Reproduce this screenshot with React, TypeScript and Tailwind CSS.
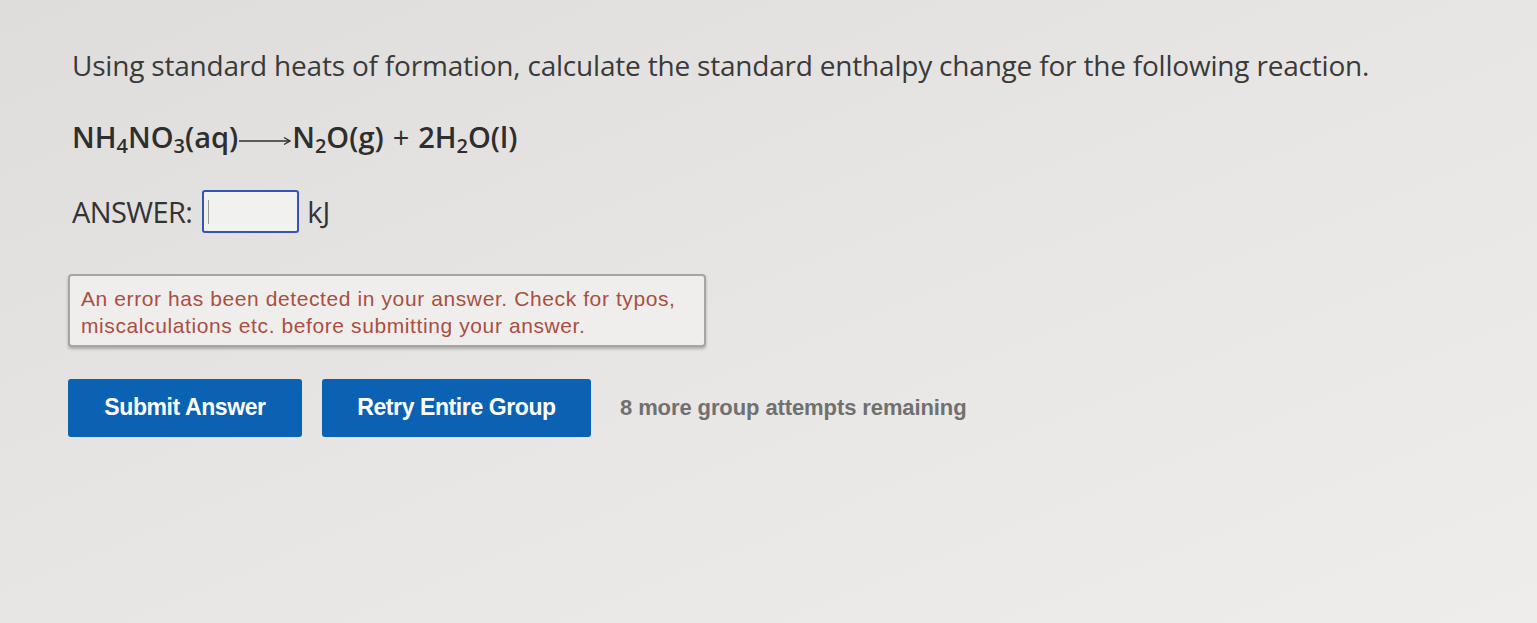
export default function App() {
  return (
    <div className="min-h-[623px] w-full bg-gradient-to-br from-[#dedddb] via-[#e7e6e4] to-[#eeedeb] pl-[72px] pt-[44px]">
      <p className="text-[28px] leading-[42px] text-[#3a3a3a] tracking-[-0.2px]" style={{ fontFamily: '"Open Sans", sans-serif' }}>
        Using standard heats of formation, calculate the standard enthalpy change for the following reaction.
      </p>

      <p className="mt-[31px] flex items-baseline text-[29px] leading-[40px] font-semibold text-[#2e2e2e]" style={{ fontFamily: '"Open Sans", sans-serif' }}>
        <span>
          NH<sub className="text-[20px]">4</sub>NO<sub className="text-[20px]">3</sub>(aq)
        </span>
        {/* long reaction arrow */}
        <svg width="52" height="12" viewBox="0 0 52 12" className="mx-[1px] self-center translate-y-[4px]">
          <line x1="0" y1="6" x2="50" y2="6" stroke="#2e2e2e" strokeWidth="1.4" />
          <path d="M45 2.5 L51 6 L45 9.5" fill="none" stroke="#2e2e2e" strokeWidth="1.4" />
        </svg>
        <span>
          N<sub className="text-[20px]">2</sub>O(g)<span className="mx-[9px] font-normal">+</span>2H<sub className="text-[20px]">2</sub>O(l)
        </span>
      </p>

      <div className="mt-[33px] flex items-center text-[29px] text-[#333]" style={{ fontFamily: '"Open Sans", sans-serif' }}>
        <span className="tracking-[-0.6px]">ANSWER:</span>
        <div className="ml-[10px] h-[43px] w-[97px] rounded-[3px] border-[2px] border-[#3553b8] bg-[#f1f1ef] px-[4px] py-[8px]">
          <div className="h-[24px] w-[1px] bg-[#999]" />
        </div>
        <span className="ml-[8px]">kJ</span>
      </div>

      <div className="-ml-[4px] mt-[40px] h-[73px] w-[638px] rounded-[4px] border-[2px] border-[#a5a5a5] bg-[#efeeec] px-[11px] pt-[9px] shadow-[0_2px_3px_rgba(0,0,0,0.25)]">
        <p className="text-[21px] leading-[27px] text-[#a94f42] tracking-[0.6px]" style={{ fontFamily: '"Liberation Sans", Arial, sans-serif' }}>
          An error has been detected in your answer. Check for typos,
          <br />
          miscalculations etc. before submitting your answer.
        </p>
      </div>

      <div className="-ml-[4px] mt-[32px] flex items-center gap-[20px]" style={{ fontFamily: '"Liberation Sans", Arial, sans-serif' }}>
        <button className="h-[58px] w-[234px] rounded-[3px] bg-[#0b62b3] text-[23px] font-bold text-white tracking-[-0.4px]">
          Submit Answer
        </button>
        <button className="h-[58px] w-[269px] rounded-[3px] bg-[#0b62b3] text-[23px] font-bold text-white tracking-[-0.4px]">
          Retry Entire Group
        </button>
        <span className="ml-[9px] text-[22px] font-bold text-[#707070] tracking-[-0.1px]">
          8 more group attempts remaining
        </span>
      </div>
    </div>
  );
}
